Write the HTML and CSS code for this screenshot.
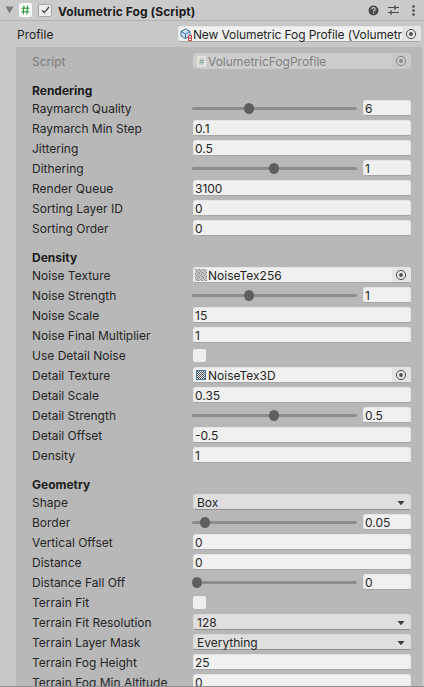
FILE: index.html
```html
<!DOCTYPE html>
<html lang="en">
<head>
<meta charset="utf-8">
<title>Volumetric Fog (Script)</title>
<link rel="stylesheet" href="styles.css">
</head>
<body>
<svg class="defs" width="0" height="0" aria-hidden="true">
  <symbol id="picker" viewBox="0 0 12 12"><circle cx="6" cy="6" r="4.6" fill="none" stroke="currentColor" stroke-width="1"/><circle cx="6" cy="6" r="1.9" fill="currentColor"/></symbol>
  <symbol id="caret" viewBox="0 0 8 6"><path d="M0.5 1h7L4 5.2z" fill="#3c3c3c"/></symbol>
</svg>
<div class="inspector">
  <header class="comp-head">
    <svg class="fold" width="9" height="8" viewBox="0 0 9 8"><path d="M0.5 0.5h8L4.5 7.5z" fill="#7b7b7b"/></svg>
    <span class="script-badge"><svg width="9" height="10" viewBox="0 0 9 10"><path d="M3 0.5 2.2 9.5M6.6 0.5 5.8 9.5M0.6 3.2h7.8M0.4 6.8h7.8" stroke="#1f8a2e" stroke-width="1" fill="none"/></svg></span>
    <span class="enable"><svg width="9" height="8" viewBox="0 0 9 8"><path d="M1 4.2 3.4 6.6 8 1" stroke="#404040" stroke-width="1.3" fill="none"/></svg></span>
    <span class="comp-title">Volumetric Fog (Script)</span>
    <span class="head-icons">
      <svg width="11" height="11" viewBox="0 0 11 11"><circle cx="5.5" cy="5.5" r="5" fill="#4a4a4a"/><path d="M3.8 4.2c.1-2.1 3.5-2 3.4 0 0 1.300-1.700 1.200-1.700 2.500" stroke="#d2d2d2" stroke-width="1.100" fill="none"/><rect x="5" y="7.600" width="1.100" height="1.200" fill="#d2d2d2"/></svg>
      <svg width="11" height="10" viewBox="0 0 11 10"><path d="M0 2.500h6M8 2.500h3M0 7.500h2M4 7.500h7" stroke="#4a4a4a" stroke-width="1"/><path d="M7 0.500v4M3 5.500v4" stroke="#4a4a4a" stroke-width="1.600"/></svg>
      <svg class="kebab" width="3" height="11" viewBox="0 0 3 11"><circle cx="1.500" cy="1.500" r="1.300" fill="#4a4a4a"/><circle cx="1.500" cy="5.500" r="1.300" fill="#4a4a4a"/><circle cx="1.500" cy="9.500" r="1.300" fill="#4a4a4a"/></svg>
    </span>
  </header>

  <div class="profile-row">
    <span class="profile-label">Profile</span>
    <div class="object-field profile-field">
      <svg class="obj-icon" width="13" height="13" viewBox="0 0 13 13"><path d="M5.500 1 10 3.400v4.600L5.500 10.500 1 8V3.400z" fill="#d7e3ee" stroke="#2f6ea5" stroke-width="1"/><path d="M1 3.400 5.500 6 10 3.400M5.500 6v4.500" stroke="#2f6ea5" stroke-width="1" fill="none"/><path d="M8.500 7.500h3v5h-3z" fill="#f4f4f4" stroke="#c23a3a" stroke-width="1"/><path d="M10 9v2" stroke="#c23a3a"/></svg>
      <span class="obj-name profile-name">New Volumetric Fog Profile (Volumetr</span>
      <span class="picker"><svg width="12" height="12"><use href="#picker"/></svg></span>
    </div>
  </div>

  <section class="panel">
    <div class="row disabled">
      <span class="label">Script</span>
      <div class="object-field script-field">
        <span class="doc-icon">#</span>
        <span class="obj-name">VolumetricFogProfile</span>
        <span class="picker"><svg width="12" height="12"><use href="#picker"/></svg></span>
      </div>
    </div>

    <h3 class="group-title">Rendering</h3>
    <div class="row"><span class="label">Raymarch Quality</span><div class="slider"><div class="track"><span class="thumb" style="left:34.5%"></span></div><div class="input num">6</div></div></div>
    <div class="row"><span class="label">Raymarch Min Step</span><div class="input">0.1</div></div>
    <div class="row"><span class="label">Jittering</span><div class="input">0.5</div></div>
    <div class="row"><span class="label">Dithering</span><div class="slider"><div class="track"><span class="thumb" style="left:49.5%"></span></div><div class="input num">1</div></div></div>
    <div class="row"><span class="label">Render Queue</span><div class="input">3100</div></div>
    <div class="row"><span class="label">Sorting Layer ID</span><div class="input">0</div></div>
    <div class="row"><span class="label">Sorting Order</span><div class="input">0</div></div>

    <h3 class="group-title">Density</h3>
    <div class="row"><span class="label">Noise Texture</span>
      <div class="object-field">
        <svg class="tex-icon" width="12" height="12" viewBox="0 0 12 12"><defs><pattern id="noise" width="4" height="4" patternUnits="userSpaceOnUse"><rect width="4" height="4" fill="#c4c4c4"/><rect width="1" height="1" fill="#7d7d7d"/><rect x="2" y="1" width="1" height="1" fill="#8f8f8f"/><rect x="1" y="2" width="1" height="1" fill="#9a9a9a"/><rect x="3" y="3" width="1" height="1" fill="#7d7d7d"/></pattern></defs><rect width="12" height="12" fill="url(#noise)"/></svg>
        <span class="obj-name">NoiseTex256</span>
        <span class="picker"><svg width="12" height="12"><use href="#picker"/></svg></span>
      </div>
    </div>
    <div class="row"><span class="label">Noise Strength</span><div class="slider"><div class="track"><span class="thumb" style="left:34.5%"></span></div><div class="input num">1</div></div></div>
    <div class="row"><span class="label">Noise Scale</span><div class="input">15</div></div>
    <div class="row"><span class="label">Noise Final Multiplier</span><div class="input">1</div></div>
    <div class="row"><span class="label">Use Detail Noise</span><span class="check"></span></div>
    <div class="row"><span class="label">Detail Texture</span>
      <div class="object-field">
        <svg class="tex-icon" width="12" height="12" viewBox="0 0 12 12"><defs><pattern id="chk" width="2" height="2" patternUnits="userSpaceOnUse"><rect width="2" height="2" fill="#e6e6e6"/><rect width="1" height="1" fill="#555"/><rect x="1" y="1" width="1" height="1" fill="#555"/></pattern></defs><rect x="1.500" y="1.500" width="9" height="9" fill="url(#chk)" stroke="#3f74a8"/></svg>
        <span class="obj-name">NoiseTex3D</span>
        <span class="picker"><svg width="12" height="12"><use href="#picker"/></svg></span>
      </div>
    </div>
    <div class="row"><span class="label">Detail Scale</span><div class="input">0.35</div></div>
    <div class="row"><span class="label">Detail Strength</span><div class="slider"><div class="track"><span class="thumb" style="left:49.5%"></span></div><div class="input num">0.5</div></div></div>
    <div class="row"><span class="label">Detail Offset</span><div class="input">-0.5</div></div>
    <div class="row"><span class="label">Density</span><div class="input">1</div></div>

    <h3 class="group-title">Geometry</h3>
    <div class="row"><span class="label">Shape</span><div class="dropdown"><span>Box</span><svg width="8" height="6"><use href="#caret"/></svg></div></div>
    <div class="row"><span class="label">Border</span><div class="slider"><div class="track"><span class="thumb" style="left:8%"></span></div><div class="input num">0.05</div></div></div>
    <div class="row"><span class="label">Vertical Offset</span><div class="input">0</div></div>
    <div class="row"><span class="label">Distance</span><div class="input">0</div></div>
    <div class="row"><span class="label">Distance Fall Off</span><div class="slider"><div class="track"><span class="thumb" style="left:3%"></span></div><div class="input num">0</div></div></div>
    <div class="row"><span class="label">Terrain Fit</span><span class="check"></span></div>
    <div class="row"><span class="label">Terrain Fit Resolution</span><div class="dropdown"><span>128</span><svg width="8" height="6"><use href="#caret"/></svg></div></div>
    <div class="row"><span class="label">Terrain Layer Mask</span><div class="dropdown"><span>Everything</span><svg width="8" height="6"><use href="#caret"/></svg></div></div>
    <div class="row"><span class="label">Terrain Fog Height</span><div class="input">25</div></div>
    <div class="row"><span class="label">Terrain Fog Min Altitude</span><div class="input">0</div></div>
  </section>
</div>
</body>
</html>
```
FILE: styles.css
```css
* { box-sizing: border-box; }
html, body { margin: 0; padding: 0; height: 100%; overflow: hidden; }
body {
  background: #c8c8c8;
  color: #262626;
  font-family: Inter, "Liberation Sans", sans-serif;
  font-size: 12px;
  line-height: 16px;
}
.defs { position: absolute; }
.inspector { height: 687px; overflow: hidden; border-bottom: 1px solid #8f8f8f; }

.comp-head {
  height: 21px;
  display: flex;
  align-items: center;
  padding-left: 5px;
  background: #cbcbcb;
  border-bottom: 1px solid #b2b2b2;
}
.fold { margin-right: 5px; }
.script-badge {
  width: 13px; height: 14px;
  display: flex; align-items: center; justify-content: center;
  background: #fbfbfb;
  border-radius: 2px;
  margin-right: 6px;
}
.enable {
  width: 14px; height: 13px;
  display: flex; align-items: center; justify-content: center;
  background: #eeeeee;
  border: 1px solid #a8a8a8;
  border-radius: 2px;
  margin-right: 6px;
}
.comp-title { font-weight: 700; flex: 1; padding-top: 3px; letter-spacing: 0.08px; color: #1c1c1c; }
.head-icons { display: flex; align-items: center; gap: 9px; padding-right: 9px; }
.kebab { margin-left: 4px; }

.profile-row { height: 26px; display: flex; align-items: flex-start; padding: 5px 3px 0 17px; }
.profile-label { width: 161px; height: 16px; padding-top: 1px; }

.panel {
  margin-right: 2px;
  margin-left: 16px;
  padding: 4px 11px 0 16px;
  background: #b8b8b8;
}
.row { height: 20px; display: flex; align-items: center; }
.label { width: 161px; flex: none; white-space: nowrap; padding-top: 2px; }
.group-title {
  margin: 9px 0 0;
  height: 18px;
  padding-top: 2px;
  line-height: 18px;
  font-size: 12px;
  font-weight: 700;
  color: #1c1c1c;
}

.input {
  flex: 1;
  height: 16px;
  padding: 1px 1px 0;
  background: #f0f0f0;
  border: 1px solid #e6e6e6;
  border-bottom-color: #a5a5a5;
  border-radius: 3px;
  line-height: 14px;
}
.slider { flex: 1; display: flex; align-items: center; gap: 6px; margin-left: -1px; }
.track { position: relative; flex: 1; height: 3px; background: #8c8c8c; border-radius: 2px; }
.thumb {
  position: absolute; top: -4px;
  width: 10px; height: 11px; margin-left: -5px;
  background: #5f5f5f;
  border-radius: 50%;
}
.num { flex: 0 0 48px; }

.object-field {
  flex: 1;
  height: 16px;
  display: flex;
  align-items: center;
  background: #f0f0f0;
  border: 1px solid #e6e6e6;
  border-bottom-color: #a8a8a8;
  border-radius: 3px;
  padding-left: 1px;
}
.obj-name { flex: 1; min-width: 0; white-space: nowrap; overflow-x: clip; line-height: 14px; padding-top: 1px; }
.profile-name { letter-spacing: -0.1px; }
.tex-icon { flex: none; margin-right: 1px; }
.obj-icon { flex: none; }
.picker {
  flex: none;
  width: 18px; height: 14px;
  display: flex; align-items: center; justify-content: center;
  background: #e4e4e4;
  color: #4f4f4f;
  border-radius: 0 2px 2px 0;
}
.profile-field { flex: 1; }

.script-field { background: #cdcdcd; border-color: #cacaca; color: #808080; }
.script-field .picker { background: #c7c7c7; color: #8a8a8a; }
.disabled .label { color: #7a7a7a; }
.doc-icon {
  width: 9px; height: 11px;
  margin: 0 2px;
  background: #e2e2e2;
  color: #8aa68e;
  font-size: 9px; line-height: 11px; text-align: center;
  flex: none;
}

.check {
  width: 13px; height: 13px;
  background: #eeeeee;
  border-radius: 2px;
}
.dropdown {
  flex: 1;
  height: 16px;
  display: flex; align-items: center; justify-content: space-between;
  padding: 1px 5px 0 3px;
  background: #dfdfdf;
  border: 1px solid #d8d8d8;
  border-bottom-color: #8f8f8f;
  border-radius: 3px;
  line-height: 14px;
}
```
